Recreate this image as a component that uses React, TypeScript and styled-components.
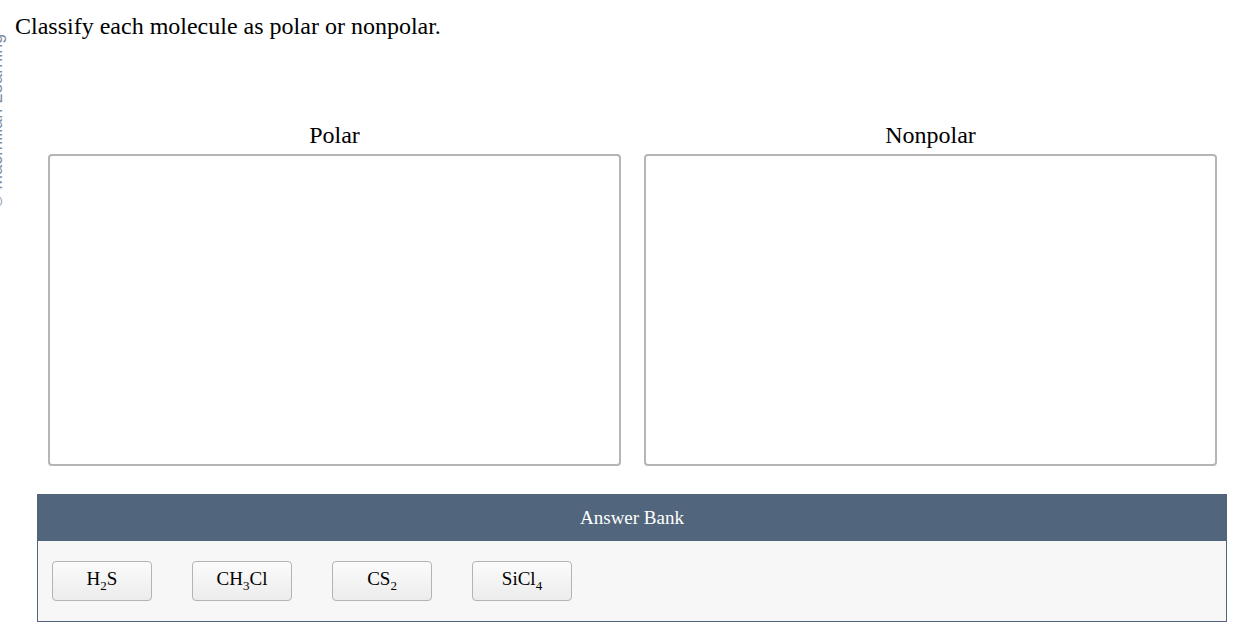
import React from 'react'
import styled, { createGlobalStyle } from 'styled-components'

const GlobalStyle = createGlobalStyle`
  html, body {
    margin: 0;
    padding: 0;
    background: #fff;
  }
  body {
    font-family: "Liberation Serif", "Times New Roman", serif;
    color: #000;
  }
`

const Page = styled.div`
  position: relative;
  width: 1254px;
  height: 644px;
  overflow: hidden;
  padding-top: 12px;
  box-sizing: border-box;
`

// copyright line, rotated and mostly off the left edge
const Credit = styled.div`
  position: absolute;
  left: -13px;
  top: 208px;
  transform: rotate(-90deg);
  transform-origin: left top;
  font-family: "Liberation Sans", Arial, sans-serif;
  font-size: 18px;
  color: #7f8fa0;
  white-space: nowrap;
  line-height: 1;
`

const Title = styled.h1`
  margin: 0 0 0 15px;
  font-size: 24px;
  font-weight: normal;
  line-height: 28px;
`

const Zones = styled.div`
  display: grid;
  grid-template-columns: 573px 573px;
  column-gap: 23px;
  margin: 81px 0 0 48px;
`

const Zone = styled.div`
  display: flex;
  flex-direction: column;
`

const ZoneLabel = styled.div`
  text-align: center;
  font-size: 24px;
  line-height: 28px;
  margin-bottom: 5px;
`

const DropBox = styled.div`
  height: 312px;
  box-sizing: border-box;
  border: 2px solid #b5b5b5;
  border-radius: 4px;
  background: #fff;
`

const Bank = styled.div`
  width: 1190px;
  margin: 28px 0 0 37px;
`

const BankHeader = styled.div`
  height: 47px;
  background: #51657c;
  color: #fff;
  font-size: 19px;
  display: flex;
  align-items: center;
  justify-content: center;
`

const BankBody = styled.div`
  height: 81px;
  box-sizing: border-box;
  background: #f7f7f7;
  border: 1px solid #51657c;
  border-top: none;
  display: flex;
  gap: 40px;
  padding: 20px 0 0 14px;
  align-items: flex-start;
`

const Chip = styled.div`
  width: 100px;
  height: 40px;
  box-sizing: border-box;
  border: 1px solid #b4b4b4;
  border-radius: 4px;
  background: linear-gradient(#fbfbfb, #ececec);
  display: flex;
  align-items: center;
  justify-content: center;
  font-size: 19px;
  padding-bottom: 6px;
`

const Formula = styled.span`
  line-height: 1;

  sub {
    font-size: 13px;
    vertical-align: -5px;
    line-height: 0;
  }
`

const molecules: React.ReactNode[] = [
  <>H<sub>2</sub>S</>,
  <>CH<sub>3</sub>Cl</>,
  <>CS<sub>2</sub></>,
  <>SiCl<sub>4</sub></>,
]

export default function App() {
  return (
    <>
      <GlobalStyle />
      <Page>
        <Credit>© Macmillan Learning</Credit>
        <Title>Classify each molecule as polar or nonpolar.</Title>
        <Zones>
          <Zone>
            <ZoneLabel>Polar</ZoneLabel>
            <DropBox />
          </Zone>
          <Zone>
            <ZoneLabel>Nonpolar</ZoneLabel>
            <DropBox />
          </Zone>
        </Zones>
        <Bank>
          <BankHeader>Answer Bank</BankHeader>
          <BankBody>
            {molecules.map((m, i) => (
              <Chip key={i}>
                <Formula>{m}</Formula>
              </Chip>
            ))}
          </BankBody>
        </Bank>
      </Page>
    </>
  )
}
